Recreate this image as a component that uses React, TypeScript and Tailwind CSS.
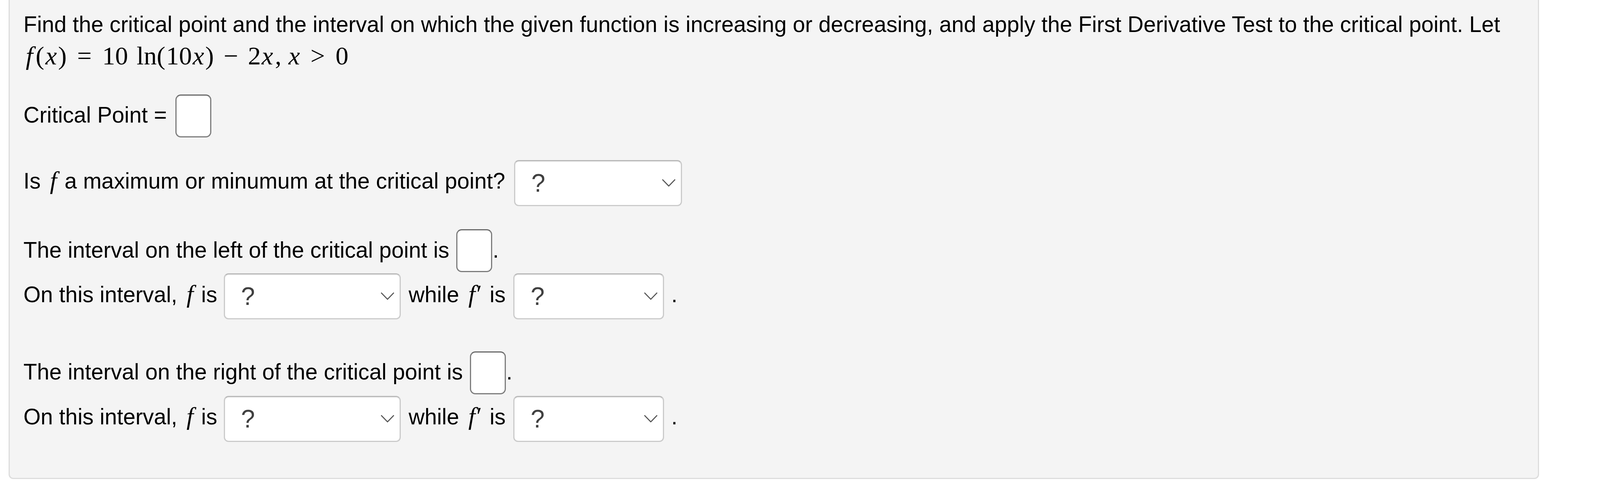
import React from "react";

function Chevron() {
  return (
    <svg width="34" height="20" viewBox="0 0 34 20" className="shrink-0">
      <polyline points="1.5,1.5 17,17.5 32.5,1.5" fill="none" stroke="#555555" strokeWidth="2.6" strokeLinecap="round" strokeLinejoin="round" />
    </svg>
  );
}

function Select({ w }: { w: string }) {
  return (
    <div
      className={`${w} h-[118px] shrink-0 flex items-center justify-between bg-white border-[3px] border-[#cbcbcb] border-t-[#b9b9b9] rounded-[12px] shadow-[inset_0_2px_2px_rgba(0,0,0,0.06)] pl-[41px] pr-[14px]`}
    >
      <span className="text-[64px] leading-none text-[#404040] font-['Liberation_Sans',Arial,sans-serif]">?</span>
      <Chevron />
    </div>
  );
}

function Box() {
  return (
    <div className="w-[92px] h-[110px] shrink-0 bg-white border-[3px] border-[#7d7d7d] border-t-[#6a6a6a] rounded-[14px]" />
  );
}

function F({ prime }: { prime?: boolean }) {
  return (
    <span className="font-['Liberation_Serif',serif] italic text-[64px] leading-none inline-block pl-[8px] pr-[4px]">
      f{prime ? <span className="not-italic ml-[3px]">′</span> : null}
    </span>
  );
}

function Formula() {
  const s = "font-['Liberation_Serif',serif]";
  return (
    <div className={`h-[80px] leading-[80px] whitespace-nowrap ${s} text-[66px] flex items-baseline`}>
      <span className="italic ml-[6px]">f</span>
      <span className="ml-[7px]">(</span>
      <span className="italic ml-[3px]">x</span>
      <span className="ml-[3px]">)</span>
      <span className="ml-[27px]">=</span>
      <span className="ml-[27px]">10</span>
      <span className="ml-[22px]">ln</span>
      <span>(</span>
      <span className="ml-[2px]">10</span>
      <span className="italic ml-[2px]">x</span>
      <span className="ml-[3px]">)</span>
      <span className="ml-[25px]">−</span>
      <span className="ml-[25px]">2</span>
      <span className="italic ml-[2px]">x</span>
      <span className="ml-[5px]">,</span>
      <span className="italic ml-[18px]">x</span>
      <span className="ml-[27px]">&gt;</span>
      <span className="ml-[27px]">0</span>
    </div>
  );
}

export default function App() {
  return (
    <div className="min-h-screen bg-white">
      <div className="ml-[22px] w-[3918px] bg-[#f4f4f4] border-x-[3px] border-b-[3px] border-[#dddddd] rounded-b-[12px] pl-[35px] pt-[23px] pb-[92px] font-['Liberation_Sans',Arial,sans-serif] text-[56.7px] text-black">
        <div className="leading-[80px] whitespace-nowrap">
          Find the critical point and the interval on which the given function is increasing or decreasing, and apply the First Derivative Test to the critical point. Let
        </div>
        <Formula />

        <div className="mt-[59px] h-[110px] flex items-center">
          <span className="leading-[80px] mb-[5px] whitespace-nowrap">Critical Point =</span>
          <div className="ml-[22px]"><Box /></div>
        </div>

        <div className="mt-[58px] h-[118px] flex items-center">
          <span className="leading-[80px] mb-[11px] whitespace-nowrap">
            Is <F /> a maximum or minumum at the critical point?
          </span>
          <div className="ml-[23px]"><Select w="w-[430px]" /></div>
        </div>

        <div className="mt-[59px] h-[110px] flex items-center">
          <span className="leading-[80px] mb-[3px] whitespace-nowrap">The interval on the left of the critical point is</span>
          <div className="ml-[18px]"><Box /></div>
          <span className="leading-[80px] mb-[3px] ml-[1px]">.</span>
        </div>

        <div className="mt-[3px] h-[118px] flex items-center">
          <span className="leading-[80px] mb-[9px] whitespace-nowrap">
            On this interval, <F /> is
          </span>
          <div className="ml-[17px]"><Select w="w-[453px]" /></div>
          <span className="leading-[80px] mb-[9px] ml-[20px] whitespace-nowrap">
            while <F prime /> is
          </span>
          <div className="ml-[20px]"><Select w="w-[386px]" /></div>
          <span className="leading-[80px] mb-[9px] ml-[18px]">.</span>
        </div>

        <div className="mt-[81px] h-[112px] flex items-center">
          <span className="leading-[80px] mb-[4px] whitespace-nowrap">The interval on the right of the critical point is</span>
          <div className="ml-[18px]"><Box /></div>
          <span className="leading-[80px] mb-[4px] ml-[1px]">.</span>
        </div>

        <div className="mt-[3px] h-[118px] flex items-center">
          <span className="leading-[80px] mb-[10px] whitespace-nowrap">
            On this interval, <F /> is
          </span>
          <div className="ml-[17px]"><Select w="w-[453px]" /></div>
          <span className="leading-[80px] mb-[10px] ml-[20px] whitespace-nowrap">
            while <F prime /> is
          </span>
          <div className="ml-[20px]"><Select w="w-[386px]" /></div>
          <span className="leading-[80px] mb-[10px] ml-[18px]">.</span>
        </div>
      </div>
    </div>
  );
}
